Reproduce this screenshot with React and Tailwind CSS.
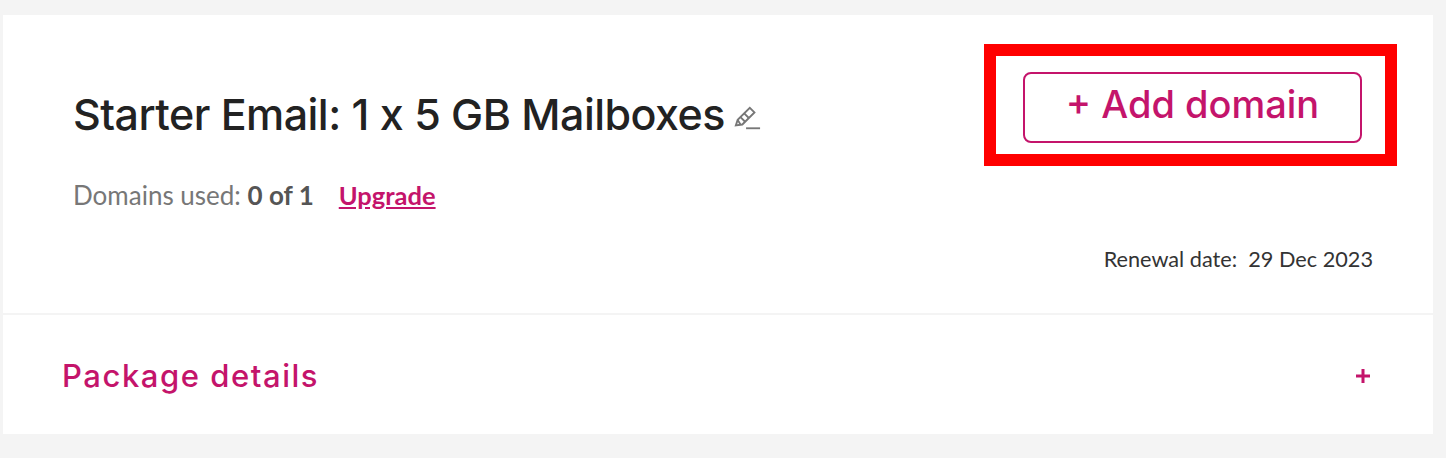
import React from 'react'

export default function App() {
  return (
    <div className="relative h-[458px] w-[1446px] overflow-hidden bg-[#f4f4f4] pt-[15px] pl-[3px] font-['Inter',sans-serif]">
      <div className="flex h-[419px] w-[1430px] flex-col bg-white">
        {/* top section */}
        <div className="flex h-[300px] justify-between border-b-2 border-[#f4f4f4] pr-[60px] pl-[70px]">
          <div className="pt-[74px]">
            <div className="flex items-end">
              <h2 className="text-[43px] leading-[50px] font-medium tracking-[-0.54px] text-[#222222]">
                Starter Email: 1 x 5 GB Mailboxes
              </h2>
              <svg viewBox="0 0 30 30" className="mb-[7px] ml-[8px] h-[28px] w-[28px] text-[#777777]" fill="none" stroke="currentColor" strokeWidth="2">
                <path d="M3 23l2-6L18 4l5 5L10 22z" />
                <path d="M8 14l5 5M12 10l5 5M5 17l3 5" />
                <path d="M14 26h15" />
              </svg>
            </div>
            <p className="mt-[40px] font-['Lato',sans-serif] text-[26px] leading-[32px] text-[#777777]">
              Domains used: <span className="font-bold text-[#555555]">0 of 1</span>
              <a className="ml-[25px] text-[25.5px] font-bold text-[#c4146b] underline">Upgrade</a>
            </p>
          </div>
          <div className="flex flex-col items-end">
            <button className="mt-[57px] mr-[11px] flex h-[71px] w-[339px] items-center justify-center rounded-[8px] border-2 border-[#c4146b] pb-[6px] text-[38px] font-medium text-[#c4146b]">
              + Add domain
            </button>
            <p className="mt-[102px] font-['Lato',sans-serif] text-[21.7px] leading-[28px] text-[#333333]">
              Renewal date:&nbsp; 29 Dec 2023
            </p>
          </div>
        </div>
        {/* package details row */}
        <div className="flex flex-1 items-center justify-between pt-[3px] pr-[62px] pl-[59px]">
          <span className="text-[31px] font-medium tracking-[1.55px] text-[#c4146b]">Package details</span>
          <svg viewBox="0 0 16 16" className="h-4 w-4 text-[#c4146b]" stroke="currentColor" strokeWidth="3">
            <path d="M8 1v14M1 8h14" />
          </svg>
        </div>
      </div>
      {/* highlight box */}
      <div className="absolute top-[44px] left-[984px] h-[122px] w-[413px] border-[12px] border-[#ff0000]" />
    </div>
  )
}
